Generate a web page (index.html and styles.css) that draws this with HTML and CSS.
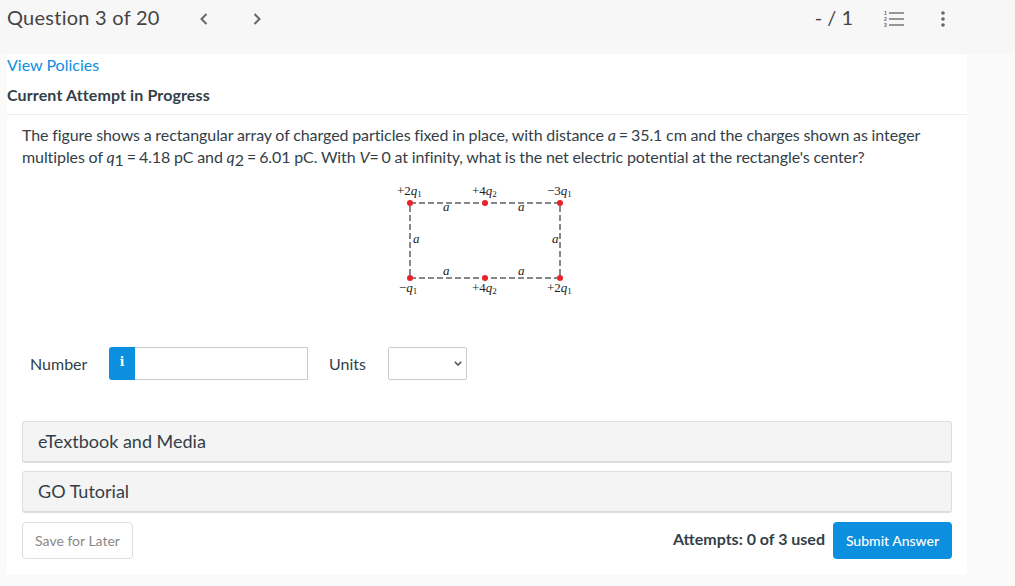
FILE: index.html
```html
<html>
<head>
	<title>Question 3 of 20</title>
	<link rel="stylesheet" href="styles.css">
</head>
<body>
<div class="top_bar">
	<div class="top_left">
		<span class="question_title">Question 3 of 20</span>
		<svg class="nav_arrow" viewBox="0 0 10 14"><path d="M7.5 2 2.5 7l5 5"/></svg>
		<svg class="nav_arrow" viewBox="0 0 10 14"><path d="M2.5 2l5 5-5 5"/></svg>
	</div>
	<div class="top_right">
		<span class="score">- / 1</span>
		<svg class="list_icon" viewBox="0 0 20 14">
			<path d="M5 1h15M5 7h15M5 13h15"/>
			<text x="0" y="3" class="list_num">1</text>
			<text x="0" y="9" class="list_num">2</text>
			<text x="0" y="15" class="list_num">3</text>
		</svg>
		<svg class="more_icon" viewBox="0 0 4 16">
			<circle cx="2" cy="2" r="1.800"/>
			<circle cx="2" cy="8" r="1.800"/>
			<circle cx="2" cy="14" r="1.800"/>
		</svg>
	</div>
</div>
<div class="panel">
	<div class="panel_head">
		<a class="policies_link" href="#">View Policies</a>
		<div class="attempt_title">Current Attempt in Progress</div>
	</div>
	<div class="question_body">
		<p class="question_text">The figure shows a rectangular array of charged particles fixed in place, with distance <span class="math"><i>a</i> = 35.1</span> cm and the charges shown as integer multiples of <span class="math"><i>q</i><sub>1</sub> = 4.18</span> pC and <span class="math"><i>q</i><sub>2</sub> = 6.01</span> pC. With <span class="math"><i>V</i>= 0</span> at infinity, what is the net electric potential at the rectangle's center?</p>
		<div class="figure_wrap">
			<svg class="figure" viewBox="0 0 230 130">
				<path class="dash" d="M41 28H191V103H41Z"/>
				<g class="dots">
					<circle cx="41" cy="28" r="3"/>
					<circle cx="116" cy="28" r="3"/>
					<circle cx="191" cy="28" r="3"/>
					<circle cx="41" cy="103" r="3"/>
					<circle cx="116" cy="103" r="3"/>
					<circle cx="191" cy="103" r="3"/>
				</g>
				<g class="fig_text">
					<text x="28" y="20">+2<tspan class="fig_q">q</tspan><tspan class="fig_sub" dy="2">1</tspan></text>
					<text x="103" y="20">+4<tspan class="fig_q">q</tspan><tspan class="fig_sub" dy="2">2</tspan></text>
					<text x="178" y="20">−3<tspan class="fig_q">q</tspan><tspan class="fig_sub" dy="2">1</tspan></text>
					<text x="30" y="117">−<tspan class="fig_q">q</tspan><tspan class="fig_sub" dy="2">1</tspan></text>
					<text x="103" y="117">+4<tspan class="fig_q">q</tspan><tspan class="fig_sub" dy="2">2</tspan></text>
					<text x="178" y="117">+2<tspan class="fig_q">q</tspan><tspan class="fig_sub" dy="2">1</tspan></text>
					<g class="fig_q">
						<text x="74" y="36">a</text>
						<text x="149" y="36">a</text>
						<text x="74" y="100">a</text>
						<text x="149" y="100">a</text>
						<text x="44" y="68">a</text>
						<text x="183" y="68">a</text>
					</g>
				</g>
			</svg>
		</div>
		<div class="answer_row">
			<label class="answer_label">Number</label>
			<div class="input_group">
				<span class="info_button">i</span>
				<input class="number_input" type="text">
			</div>
			<label class="answer_label units_label">Units</label>
			<div class="select_wrap">
				<select class="units_select"><option></option></select>
				<svg class="select_arrow" viewBox="0 0 8 5"><path d="M.8.8 4 4 7.200.8"/></svg>
			</div>
		</div>
		<div class="accordion first_accordion">eTextbook and Media</div>
		<div class="accordion">GO Tutorial</div>
		<div class="footer_row">
			<button class="save_button">Save for Later</button>
			<div class="submit_group">
				<span class="attempts">Attempts: 0 of 3 used</span>
				<button class="submit_button">Submit Answer</button>
			</div>
		</div>
	</div>
</div>
</body>
</html>
```

FILE: styles.css
```css
html {
	background: #fafafa;
}

body {
	margin: 0;
	padding: 0;
	font-family: Lato, sans-serif;
	color: #333f48;
	overflow: hidden;
}

.top_bar {
	height: 54px;
	background: #f7f7f7;
	display: flex;
	justify-content: space-between;
	padding: 0 70px 0 7px;
}

.top_left {
	display: flex;
	align-items: flex-start;
	padding-top: 6px;
}

.question_title {
	font-size: 20px;
	line-height: 26px;
	letter-spacing: 0.25px;
	margin-top: -2px;
	color: #444;
	width: 192px;
}

.nav_arrow {
	width: 10px;
	height: 14px;
	margin-top: 6px;
	margin-right: 43px;
	fill: none;
	stroke: #666;
	stroke-width: 2;
}

.top_right {
	display: flex;
	align-items: flex-start;
	padding-top: 6px;
}

.score {
	font-size: 20px;
	line-height: 26px;
	margin-top: -2px;
	color: #444;
	margin-right: 31px;
}

.list_icon {
	width: 20px;
	height: 14px;
	margin-top: 6px;
	margin-right: 37px;
	fill: #666;
	overflow: visible;
}

.list_icon path {
	stroke: #777;
	stroke-width: 1.700;
}

.list_num {
	font-size: 5px;
	font-family: "Liberation Sans", sans-serif;
	font-weight: bold;
}

.more_icon {
	width: 4px;
	height: 16px;
	margin-top: 5px;
	fill: #666;
}

.panel {
	width: 960px;
	height: 521px;
	margin-left: 7px;
	background: white;
}

.panel_head {
	box-sizing: border-box;
	height: 61px;
	border-bottom: 1px solid #ececec;
}

.policies_link {
	display: block;
	padding-top: 1px;
	font-size: 16px;
	line-height: 20px;
	color: #0d8fe0;
	text-decoration: none;
}

.attempt_title {
	margin-top: 10px;
	font-size: 16px;
	line-height: 20px;
	letter-spacing: 0.12px;
	font-weight: bold;
	color: #333f48;
}

.question_body {
	padding: 9px 15px 0;
}

.question_text {
	margin: 0;
	font-size: 16px;
	line-height: 22px;
	letter-spacing: -0.08px;
	word-spacing: -0.25px;
	color: #333f48;
}

.math {
	word-spacing: -1px;
}

.question_text sub {
	font-size: 16px;
	line-height: 0;
	vertical-align: -3px;
}

.figure_wrap {
	display: flex;
	justify-content: center;
	margin-top: 7px;
}

.figure {
	width: 230px;
	height: 130px;
	margin-left: -7px;
}

.dash {
	fill: none;
	stroke: #111;
	stroke-width: 1;
	stroke-dasharray: 6 3;
}

.dots {
	fill: #e8232c;
}

.fig_text {
	font-family: "Liberation Serif", serif;
	font-size: 13px;
	fill: #222;
}

.fig_q {
	font-style: italic;
}

.fig_sub {
	font-size: 9px;
}

.answer_row {
	display: flex;
	align-items: center;
	margin-top: 42px;
	padding-left: 8px;
}

.answer_label {
	font-size: 16px;
	color: #333f48;
	width: 79px;
}

.input_group {
	display: flex;
	height: 33px;
}

.info_button {
	width: 26px;
	background: #0d8fe0;
	color: white;
	border-radius: 3px 0 0 3px;
	font-family: "DejaVu Serif", serif;
	font-weight: bold;
	font-size: 12px;
	line-height: 31px;
	text-align: center;
}

.number_input {
	width: 173px;
	height: 33px;
	box-sizing: border-box;
	border: 1px solid #ccc;
	border-left: 0;
	padding: 0;
	outline: none;
}

.units_label {
	width: 59px;
	margin-left: 21px;
}

.select_wrap {
	position: relative;
	width: 79px;
	height: 33px;
}

.units_select {
	appearance: none;
	width: 79px;
	height: 33px;
	border: 1px solid #ccc;
	border-radius: 2px;
	background-color: white;
}

.select_arrow {
	position: absolute;
	right: 5px;
	top: 14px;
	width: 8px;
	height: 5px;
	fill: none;
	stroke: #555;
	stroke-width: 1.600;
}

.accordion {
	height: 42px;
	box-sizing: border-box;
	margin-top: 8px;
	padding-left: 15px;
	background: #f4f4f4;
	border: 1px solid #ddd;
	border-bottom: 2px solid #ddd;
	border-radius: 3px;
	font-size: 18px;
	line-height: 39px;
	color: #333f48;
}

.first_accordion {
	margin-top: 41px;
}

.footer_row {
	display: flex;
	justify-content: space-between;
	align-items: center;
	margin-top: 9px;
}

.save_button {
	width: 111px;
	height: 37px;
	background: white;
	border: 1px solid #ddd;
	border-radius: 4px;
	font-family: Lato, sans-serif;
	font-size: 14px;
	color: #888;
}

.submit_group {
	display: flex;
	align-items: center;
	column-gap: 8px;
}

.attempts {
	font-size: 16px;
	font-weight: bold;
	color: #333f48;
	margin-bottom: 4px;
}

.submit_button {
	width: 119px;
	height: 37px;
	background: #0d8fe0;
	border: 0;
	border-radius: 4px;
	font-family: Lato, sans-serif;
	font-size: 14px;
	font-weight: 500;
	color: white;
}
```
